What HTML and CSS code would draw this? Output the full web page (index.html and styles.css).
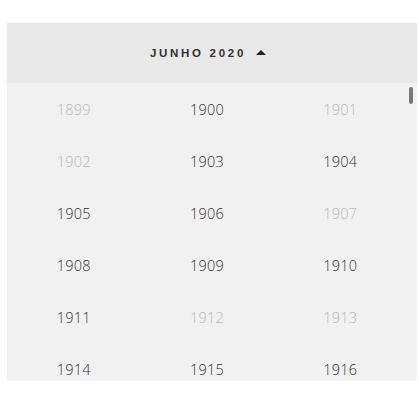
FILE: index.html
```html
<!DOCTYPE html>
<html lang="pt">
<head>
<meta charset="utf-8">
<title>Ano</title>
<link rel="stylesheet" href="styles.css">
</head>
<body>
<div class="picker">
  <div class="picker-header">
    <span class="picker-title">JUNHO 2020</span>
    <span class="caret"></span>
  </div>
  <div class="picker-body">
    <div class="years">
      <span class="year muted">1899</span>
      <span class="year">1900</span>
      <span class="year muted">1901</span>
      <span class="year muted">1902</span>
      <span class="year">1903</span>
      <span class="year">1904</span>
      <span class="year">1905</span>
      <span class="year">1906</span>
      <span class="year muted">1907</span>
      <span class="year">1908</span>
      <span class="year">1909</span>
      <span class="year">1910</span>
      <span class="year">1911</span>
      <span class="year muted">1912</span>
      <span class="year muted">1913</span>
      <span class="year">1914</span>
      <span class="year">1915</span>
      <span class="year">1916</span>
    </div>
    <div class="scroll-thumb"></div>
  </div>
</div>
</body>
</html>
```
FILE: styles.css
```css
html, body {
  margin: 0;
  padding: 0;
  background: #ffffff;
}
body {
  padding: 23px 2px 0 7px;
  font-family: "Open Sans", "Liberation Sans", sans-serif;
}
.picker {
  width: 410px;
}
.picker-header {
  height: 60px;
  background: #e8e8e8;
  display: flex;
  align-items: center;
  justify-content: center;
  gap: 10px;
  padding-right: 8px;
  box-sizing: border-box;
}
.picker-title {
  font-family: "Liberation Sans", Arial, sans-serif;
  font-weight: bold;
  font-size: 11.5px;
  letter-spacing: 2.7px;
  color: #333333;
}
.caret {
  width: 0;
  height: 0;
  border-left: 5px solid transparent;
  border-right: 5px solid transparent;
  border-bottom: 5px solid #222222;
  margin-top: -2px;
}
.picker-body {
  position: relative;
  height: 298px;
  background: #f1f1f1;
  overflow: hidden;
}
.years {
  width: 400px;
  display: grid;
  grid-template-columns: repeat(3, 1fr);
  grid-auto-rows: 52px;
}
.year {
  display: flex;
  align-items: center;
  justify-content: center;
  font-size: 14.5px;
  font-weight: 300;
  color: #333333;
  letter-spacing: 0.2px;
}
.year.muted {
  color: #bababa;
}
.scroll-thumb {
  position: absolute;
  top: 4px;
  right: 4px;
  width: 4px;
  height: 17px;
  border-radius: 2px;
  background: #777777;
}
```
